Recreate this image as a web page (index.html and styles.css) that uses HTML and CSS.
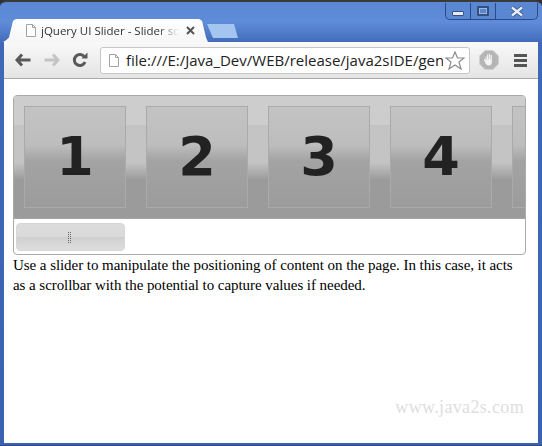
FILE: index.html
```html
<!DOCTYPE html>
<html lang="en">
<head>
    <meta charset="UTF-8">
    <meta name="viewport" content="width=device-width, initial-scale=1.0">
    <title>jQuery UI Slider - Slider scrollbar</title>
    <link rel="stylesheet" href="styles.css">
</head>
<body>
    <div class="window">
        <div class="titlebar">
            <div class="tab">
                <svg class="file-icon" width="12" height="13" viewBox="0 0 12 13">
                    <path d="M1.5 .5H7.5L10.5 3.5V12.5H1.5Z M7.5 .5V3.5H10.5" fill="#fff" stroke="#a2a2a2"/>
                </svg>
                <span class="tab-title">jQuery UI Slider - Slider scrollbar</span>
                <svg class="tab-close" width="9" height="9" viewBox="0 0 9 9">
                    <path d="M1 1L8 8M8 1L1 8" stroke="#555" stroke-width="2"/>
                </svg>
            </div>
            <div class="new-tab"></div>
            <div class="window-controls">
                <div class="control control-min"><span class="min-bar"></span></div>
                <div class="control control-max"><span class="max-box"></span></div>
                <div class="control control-close">
                    <svg width="16" height="11" viewBox="0 0 16 11">
                        <path d="M3 1.5L13 9.5M13 1.5L3 9.5" stroke="#33507f" stroke-width="4"/>
                        <path d="M3 1.5L13 9.5M13 1.5L3 9.5" stroke="#e8eef8" stroke-width="2.4"/>
                    </svg>
                </div>
            </div>
        </div>

        <div class="toolbar">
            <svg class="nav-icon" width="16" height="14" viewBox="0 0 16 14">
                <path d="M7 1.5L2 7L7 12.5M2 7H15.5" fill="none" stroke="#595959" stroke-width="3"/>
            </svg>
            <svg class="nav-icon" width="16" height="14" viewBox="0 0 16 14">
                <path d="M9 1.5L14 7L9 12.5M14 7H.5" fill="none" stroke="#c4c4c4" stroke-width="3"/>
            </svg>
            <svg class="nav-icon" width="16" height="16" viewBox="0 0 16 16">
                <path d="M12.5 5A5.5 5.5 0 1 0 13 10" fill="none" stroke="#595959" stroke-width="3"/>
                <path d="M9.5 6.5H15.5V.5Z" fill="#595959"/>
            </svg>
            <div class="url-box">
                <svg class="file-icon" width="12" height="13" viewBox="0 0 12 13">
                    <path d="M1.5 .5H7.5L10.5 3.5V12.5H1.5Z M7.5 .5V3.5H10.5" fill="#fff" stroke="#a2a2a2"/>
                </svg>
                <span class="url-text">file:///E:/Java_Dev/WEB/release/java2sIDE/gen/demo/index.html</span>
                <svg class="star" width="20" height="19" viewBox="0 0 20 19">
                    <path d="M10 1L12.5 7H19L14 11L16 18L10 14L4 18L6 11L1 7H7.5Z" fill="#fff" stroke="#8c8c8c" stroke-width="1.2"/>
                </svg>
            </div>
            <svg class="adblock" width="20" height="20" viewBox="0 0 20 20">
                <path d="M6 .5H14L19.5 6V14L14 19.5H6L.5 14V6Z" fill="#b5b5b5" stroke="#d0d0d0"/>
                <path d="M6.5 10V6.5h1V9.500h.6V4.500h1.200V9.500h.6V4h1.200V9.500h.6V5h1.200V11.500c0 2.500-1 4-3.200 4-1.800 0-2.700-1-3.400-2.500L4.800 9.800 5.700 9.300Z" fill="#f4f4f4"/>
            </svg>
            <div class="menu-icon">
                <span></span>
                <span></span>
                <span></span>
            </div>
        </div>

        <div class="page">
            <div class="scroll-pane">
                <div class="scroll-content">
                    <div class="scroll-item">1</div>
                    <div class="scroll-item">2</div>
                    <div class="scroll-item">3</div>
                    <div class="scroll-item">4</div>
                    <div class="scroll-item">5</div>
                </div>
                <div class="scroll-bar">
                    <div class="scroll-handle"><span class="grip"></span></div>
                </div>
            </div>
            <p class="description">Use a slider to manipulate the positioning of content on the page. In this case, it acts as a scrollbar with the potential to capture values if needed.</p>
            <div class="watermark">www.java2s.com</div>
        </div>
    </div>
</body>
</html>
```

FILE: styles.css
```css
* {
    margin: 0;
    padding: 0;
    box-sizing: border-box;
}

html, body {
    height: 100%;
    overflow: hidden;
}

body {
    background-color: #2f2f2f;
}

.window {
    display: flex;
    flex-direction: column;
    height: 446px;
    padding: 1px 4px 2px;
    background: linear-gradient(#5b87d3 0, #5f8cd8 20px, #3f69b6 42px, #3a62b0 100%) padding-box;
    border-top: 2px solid #3a3a3a;
    border-bottom: 1px solid #2c4a86;
    border-radius: 6px 6px 0 0;
}

/* Title bar */
.titlebar {
    position: relative;
    display: flex;
    align-items: flex-end;
    flex: none;
    height: 39px;
}

.tab {
    display: flex;
    align-items: center;
    flex: none;
    width: 205px;
    height: 23px;
    margin-left: -1px;
    padding: 0 0 0 22px;
    background: linear-gradient(#fff, #f6f6f6);
    clip-path: polygon(0 100%, 3px 92%, 6px 80%, 10px 8%, 13px 0, 196px 0, 199px 8%, 203px 80%, 205px 100%);
}

.tab-title {
    width: 138px;
    margin-left: 4px;
    overflow: hidden;
    white-space: nowrap;
    font-family: "Open Sans", sans-serif;
    font-size: 11.5px;
    color: #333;
    -webkit-mask-image: linear-gradient(to right, #000 85%, transparent);
    mask-image: linear-gradient(to right, #000 85%, transparent);
}

.tab-close {
    margin-left: 7px;
}

.new-tab {
    flex: none;
    width: 32px;
    height: 14px;
    margin: 0 0 4px -1px;
    background-color: #a5c5f1;
    clip-path: polygon(0 0, 27px 0, 31px 100%, 6px 100%);
}

.window-controls {
    position: absolute;
    top: 0;
    right: 0;
    display: flex;
    height: 17px;
    border: 1px solid #2c4a86;
    border-top: none;
    border-radius: 0 0 5px 5px;
    background-color: #5a87d2;
}

.control {
    display: flex;
    align-items: center;
    justify-content: center;
    border-right: 1px solid #2c4a86;
}

.control-min {
    width: 25px;
}

.control-max {
    width: 25px;
}

.control-close {
    width: 41px;
    border-right: none;
}

.min-bar {
    width: 12px;
    height: 5px;
    margin-top: 5px;
    background-color: #e4ebf6;
    border: 1px solid #33507f;
    border-radius: 1px;
}

.max-box {
    width: 12px;
    height: 10px;
    border: 2px solid #33507f;
    outline: 1px solid #9db6dd;
    outline-offset: -3px;
    border-radius: 1px;
}

/* Toolbar */
.toolbar {
    display: flex;
    align-items: center;
    flex: none;
    height: 37px;
    padding: 0 10px 0 11px;
    background: linear-gradient(#f9f9f9, #e4e4e4);
    border-bottom: 1px solid #a9a9a9;
}

.nav-icon {
    flex: none;
    margin-right: 13px;
}

.nav-icon:nth-child(2) {
    margin-right: 12px;
}

.url-box {
    display: flex;
    align-items: center;
    flex: none;
    width: 370px;
    height: 27px;
    margin-left: -1px;
    padding: 0 4px 0 7px;
    background-color: #fff;
    border: 1px solid #c6c6c6;
    border-radius: 3px;
}

.url-text {
    width: 318px;
    margin-left: 6px;
    overflow: hidden;
    white-space: nowrap;
    font-family: "Open Sans", sans-serif;
    font-size: 15px;
    color: #222;
}

.star {
    flex: none;
    margin-left: 2px;
}

.adblock {
    flex: none;
    margin-left: 9px;
}

.menu-icon {
    display: flex;
    flex-direction: column;
    gap: 2px;
    width: 13px;
    margin-left: 15px;
}

.menu-icon span {
    height: 3px;
    background-color: #555;
}

/* Page */
.page {
    position: relative;
    flex: 1;
    padding: 16px 0 0 9px;
    background-color: #fff;
}

.scroll-pane {
    width: 513px;
    height: 160px;
    overflow: hidden;
    border: 1px solid #aaa;
    border-radius: 4px;
}

.scroll-content {
    display: flex;
    height: 123px;
    background: linear-gradient(#cdcdcd 0, #cdcdcd 29px, #c4c4c4 29px, #c4c4c4 66px, #9b9b9b 84px, #9b9b9b 100%);
    border-bottom: 1px solid #a4a4a4;
}

.scroll-item {
    flex: none;
    width: 102px;
    height: 102px;
    margin: 10px;
    background: linear-gradient(#c3c3c3 0, #bdbdbd 38px, #a3a3a3 54px, #9c9c9c 100%);
    border: 1px solid #aaa;
    font-family: "DejaVu Sans", sans-serif;
    font-size: 54px;
    font-weight: bold;
    line-height: 100px;
    text-align: center;
    color: #222;
}

.scroll-bar {
    height: 35px;
    padding: 4px 0 0 2px;
}

.scroll-handle {
    display: flex;
    align-items: center;
    justify-content: center;
    width: 109px;
    height: 28px;
    background: linear-gradient(#dcdcdc 0, #dadada 50%, #cfcfcf 50%, #dedede 100%);
    border: 1px solid #d6d6d6;
    border-radius: 4px;
}

.grip {
    width: 3px;
    height: 11px;
    margin-right: 2px;
    background-image: repeating-linear-gradient(#666 0 1px, transparent 1px 2px);
    -webkit-mask-image: repeating-linear-gradient(to right, #000 0 1px, transparent 1px 2px);
    mask-image: repeating-linear-gradient(to right, #000 0 1px, transparent 1px 2px);
}

.description {
    width: 505px;
    font-family: "Liberation Serif", serif;
    font-size: 15px;
    letter-spacing: -0.06px;
    line-height: 20px;
    color: #000;
}

.watermark {
    position: absolute;
    right: 14px;
    bottom: 25px;
    font-family: "Liberation Serif", serif;
    font-size: 18px;
    letter-spacing: 0.35px;
    color: #dedede;
}
```
